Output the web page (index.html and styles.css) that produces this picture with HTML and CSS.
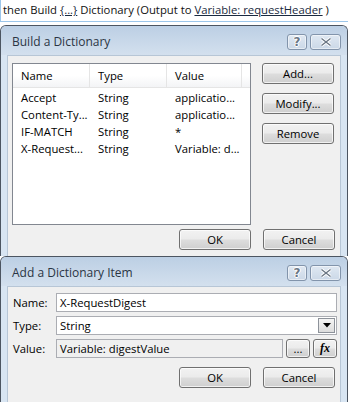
FILE: index.html
```html
<!DOCTYPE html>
<html lang="en">
<head>
    <meta charset="UTF-8">
    <title>Build a Dictionary</title>
    <link rel="stylesheet" href="styles.css">
</head>
<body>
    <div class="action-line">
        then Build <a class="link">{...}</a> Dictionary (Output to <a class="link">Variable: requestHeader</a> )
    </div>

    <div class="window first">
        <div class="titlebar">
            <span class="title">Build a Dictionary</span>
            <div class="caption-buttons">
                <span class="cap-btn help">?</span>
                <span class="cap-btn close">
                    <svg width="12" height="10" viewBox="0 0 12 10"><path d="M1.5 1.5 L10.5 8.5 M10.5 1.5 L1.5 8.5" stroke="#fff" stroke-width="3.2"/><path d="M1.5 1.5 L10.5 8.5 M10.5 1.5 L1.5 8.5" stroke="#6b7785" stroke-width="1.4"/></svg>
                </span>
            </div>
        </div>
        <div class="client">
            <div class="list-area">
                <div class="listview">
                    <div class="lv-header">
                        <div class="col c-name">Name</div>
                        <div class="col c-type">Type</div>
                        <div class="col c-value">Value</div>
                        <div class="col c-rest"></div>
                    </div>
                    <div class="lv-row"><span class="c-name">Accept</span><span class="c-type">String</span><span class="c-value">applicatio...</span></div>
                    <div class="lv-row"><span class="c-name">Content-Ty...</span><span class="c-type">String</span><span class="c-value">applicatio...</span></div>
                    <div class="lv-row"><span class="c-name">IF-MATCH</span><span class="c-type">String</span><span class="c-value">*</span></div>
                    <div class="lv-row"><span class="c-name">X-Request...</span><span class="c-type">String</span><span class="c-value">Variable: d...</span></div>
                </div>
                <div class="side-buttons">
                    <button class="btn">Add...</button>
                    <button class="btn">Modify...</button>
                    <button class="btn">Remove</button>
                </div>
            </div>
            <div class="dialog-buttons">
                <button class="btn">OK</button>
                <button class="btn">Cancel</button>
            </div>
        </div>
    </div>

    <div class="window second">
        <div class="titlebar">
            <span class="title">Add a Dictionary Item</span>
            <div class="caption-buttons">
                <span class="cap-btn help">?</span>
                <span class="cap-btn close">
                    <svg width="12" height="10" viewBox="0 0 12 10"><path d="M1.5 1.5 L10.5 8.5 M10.5 1.5 L1.5 8.5" stroke="#fff" stroke-width="3.2"/><path d="M1.5 1.5 L10.5 8.5 M10.5 1.5 L1.5 8.5" stroke="#6b7785" stroke-width="1.4"/></svg>
                </span>
            </div>
        </div>
        <div class="client">
            <div class="field-row">
                <label class="field-label">Name:</label>
                <div class="textbox">X-RequestDigest</div>
            </div>
            <div class="field-row">
                <label class="field-label">Type:</label>
                <div class="textbox select">
                    <span>String</span>
                    <span class="drop-btn">
                        <svg width="8" height="5" viewBox="0 0 8 5"><path d="M0 0 H8 L4 4.5 Z" fill="#000"/></svg>
                    </span>
                </div>
            </div>
            <div class="field-row">
                <label class="field-label">Value:</label>
                <div class="textbox readonly">Variable: digestValue</div>
                <button class="btn small dots">...</button>
                <button class="btn small fx">fx</button>
            </div>
            <div class="dialog-buttons">
                <button class="btn">OK</button>
                <button class="btn">Cancel</button>
            </div>
        </div>
    </div>
</body>
</html>
```

FILE: styles.css
```css
body {
    margin: 0;
    width: 348px;
    height: 402px;
    overflow: hidden;
    background: #ffffff;
    font-family: 'Open Sans', 'Liberation Sans', sans-serif;
    font-size: 11.3px;
    color: #000000;
}

.action-line {
    height: 21px;
    line-height: 20px;
    padding-left: 2px;
    border-left: 1px solid #9cc6ea;
    border-bottom: 1px solid #9cc6ea;
    white-space: nowrap;
    color: #111;
}

.link {
    text-decoration: underline;
    color: #1a2a40;
}

.window {
    border: 1px solid #4c5561;
    border-bottom: none;
    border-radius: 6px 6px 0 0;
    background: #d8e5f2;
    padding: 0 6px;
    overflow: hidden;
}

.first {
    margin-top: 3px;
    height: 230px;
}

.second {
    height: 146px;
    padding-bottom: 4px;
}

.titlebar {
    height: 29px;
    margin: 0 -6px;
    padding: 0 6px 0 11px;
    display: flex;
    align-items: center;
    justify-content: space-between;
    background: linear-gradient(#bccfe4, #d3e0ee);
}

.title {
    font-size: 12px;
    color: #2a3544;
    padding-top: 2px;
}

.caption-buttons {
    display: flex;
    gap: 3px;
    padding-top: 2px;
}

.cap-btn {
    display: flex;
    align-items: center;
    justify-content: center;
    height: 14px;
    border: 1px solid #8294ab;
    border-radius: 3px;
    background: linear-gradient(#dfe8f2, #cbd8e7);
    box-shadow: inset 0 0 0 1px rgba(255, 255, 255, 0.5);
}

.help {
    width: 18px;
    font-family: 'DejaVu Sans', sans-serif;
    font-weight: bold;
    font-size: 12px;
    color: #6b7785;
    text-shadow: 0 0 1px #fff, 1px 0 0 #fff, -1px 0 0 #fff, 0 1px 0 #fff, 0 -1px 0 #fff;
}

.close {
    width: 29px;
}

.client {
    background: #f0f0f0;
    border: 1px solid #b7c6d6;
    height: 100%;
    box-sizing: border-box;
    padding: 7px 5px 0 4px;
}

.list-area {
    display: flex;
    gap: 11px;
}

.listview {
    width: 237px;
    height: 160px;
    border: 1px solid #828790;
    background: #ffffff;
}

.lv-header {
    display: flex;
    height: 23px;
    margin-bottom: 1px;
    background: linear-gradient(#ffffff 50%, #f3f4f6);
    border-bottom: 1px solid #e5e5e5;
}

.col {
    line-height: 24px;
    padding-left: 8px;
    border-right: 1px solid #e5e5e5;
    box-sizing: border-box;
}

.lv-row {
    display: flex;
    height: 17px;
    line-height: 17px;
}

.lv-row span {
    padding-left: 8px;
    box-sizing: border-box;
    white-space: nowrap;
}

.c-name { width: 77px; }
.c-type { width: 77px; }
.c-value { width: 75px; }
.c-rest { flex: 1; border-right: none; }

.side-buttons {
    display: flex;
    flex-direction: column;
    gap: 9px;
}

.btn {
    width: 72px;
    height: 21px;
    padding: 0;
    font: inherit;
    color: #000;
    border: 1px solid #707070;
    border-radius: 3px;
    background: linear-gradient(#f2f2f2 0%, #ebebeb 48%, #dddddd 52%, #cfcfcf 100%);
    box-shadow: inset 0 0 0 1px rgba(255, 255, 255, 0.7);
}

.dialog-buttons {
    display: flex;
    justify-content: flex-end;
    gap: 12px;
    margin-top: 4px;
}

.second .client {
    padding: 6px 3px 0 4px;
}

.field-row {
    display: flex;
    align-items: center;
    gap: 3px;
    margin-bottom: 4px;
}

.field-label {
    width: 40px;
    padding-left: 1px;
}

.textbox {
    flex: 1;
    height: 19px;
    line-height: 18px;
    padding-left: 3px;
    border: 1px solid #abadb3;
    background: #ffffff;
    box-sizing: border-box;
    white-space: nowrap;
}

.select {
    display: flex;
    justify-content: space-between;
    padding-right: 1px;
}

.drop-btn {
    width: 17px;
    height: 15px;
    margin-top: 1px;
    display: flex;
    align-items: center;
    justify-content: center;
    border: 1px solid #8d929a;
    box-sizing: border-box;
    background: linear-gradient(#f5f5f5, #dcdcdc);
}

.readonly {
    background: #f0f0f0;
}

.btn.small {
    width: 24px;
    height: 19px;
}

.dots {
    line-height: 12px;
}

.fx {
    font-family: 'Liberation Serif', serif;
    font-style: italic;
    font-weight: bold;
    font-size: 12px;
}

.second .dialog-buttons {
    margin-top: 9px;
    padding-right: 2px;
}
```
